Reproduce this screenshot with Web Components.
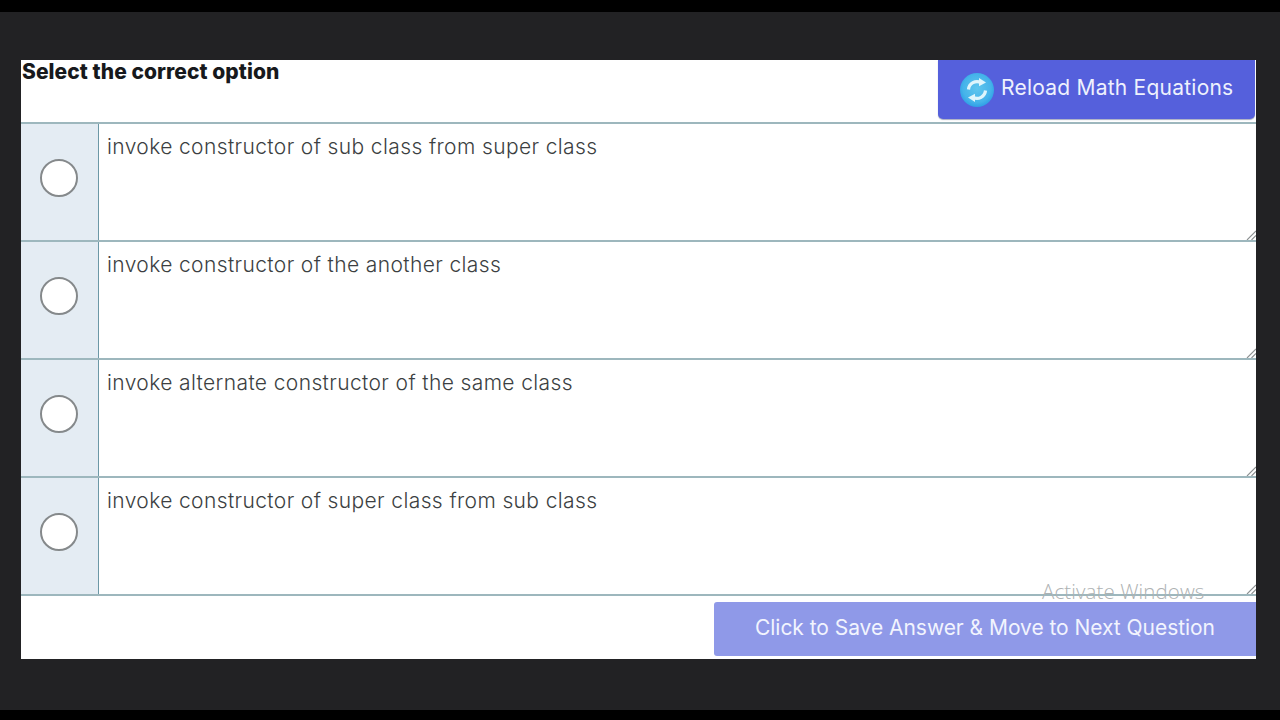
<!DOCTYPE html>
<html lang="en"><head><meta charset="utf-8"><title>Question</title>
<style>
html,body{margin:0;padding:0;background:#000;height:720px;overflow:hidden}
body{font-family:Inter,"Liberation Sans",sans-serif}
</style></head><body>
<video-frame>
  <quiz-card>
    <quiz-header slot="header">
      <span slot="title">Select the correct option</span>
      <reload-button slot="action">Reload Math Equations</reload-button>
    </quiz-header>
    <quiz-option>invoke constructor of sub class from super class</quiz-option>
    <quiz-option>invoke constructor of the another class</quiz-option>
    <quiz-option>invoke alternate constructor of the same class</quiz-option>
    <quiz-option>invoke constructor of super class from sub class</quiz-option>
    <quiz-footer slot="footer">Click to Save Answer &amp; Move to Next Question</quiz-footer>
  </quiz-card>
</video-frame>
<script>
function def(name, html){
  customElements.define(name, class extends HTMLElement{
    constructor(){super();this.attachShadow({mode:'open'}).innerHTML=html;}
  });
}
def('video-frame',`<style>
:host{display:flex;flex-direction:column;width:1280px;height:720px;background:#000}
.mid{margin-top:12px;height:698px;background:#222224;box-sizing:border-box;padding:48px 24px 0 21px}
</style><div class="mid"><slot></slot></div>`);
def('quiz-card',`<style>
:host{display:flex;flex-direction:column;width:1235px;height:599px;background:#fff;position:relative;font-family:Inter,"Liberation Sans",sans-serif}
.wm{position:absolute;left:1021px;top:518px;font:300 20.5px/26px "Open Sans","Liberation Sans",sans-serif;color:#aeb2b3;letter-spacing:.1px;white-space:nowrap}
</style><slot name="header"></slot><slot></slot><slot name="footer"></slot><div class="wm">Activate Windows</div>`);
def('quiz-header',`<style>
:host{display:flex;justify-content:space-between;align-items:flex-start;height:62px;flex:none}
.t{font:800 21px/24px Inter,"Liberation Sans",sans-serif;color:#17191c;letter-spacing:.06px;padding:0 0 0 1px}
</style><div class="t"><slot name="title"></slot></div><slot name="action"></slot>`);
def('reload-button',`<style>
:host{display:flex;align-items:center;gap:7px;box-sizing:border-box;width:317px;height:59px;margin-right:1px;padding:0 0 4px 22px;background:#5560dc;border-radius:0 0 5px 5px;box-shadow:0 1px 1px rgba(60,70,120,.45);color:#eef1fd;font:400 21px/24px Inter,"Liberation Sans",sans-serif;letter-spacing:.23px;white-space:nowrap}
svg{width:34px;height:34px;flex:none;position:relative;top:2px}
</style><svg viewBox="0 0 34 34" aria-hidden="true">
<defs><radialGradient id="g" cx=".5" cy=".45" r=".55"><stop offset="0" stop-color="#5fc6ee"/><stop offset=".75" stop-color="#45b3ea"/><stop offset="1" stop-color="#2f9fe6"/></radialGradient></defs>
<circle cx="17" cy="17" r="17" fill="url(#g)"/>
<path d="M8.500 16.500A8.600 8.600 0 0 1 21 9.600" fill="none" stroke="#dff5fc" stroke-width="3.200"/>
<path d="M19 5l7 4.600-7 3.600z" fill="#dff5fc"/>
<path d="M25.500 17.500A8.600 8.600 0 0 1 13 24.400" fill="none" stroke="#dff5fc" stroke-width="3.200"/>
<path d="M15 29l-7-4.600 7-3.600z" fill="#dff5fc"/>
</svg><span><slot></slot></span>`);
def('quiz-option',`<style>
:host{display:grid;grid-template-columns:77px 1fr;height:118px;box-sizing:border-box;border-top:2px solid #9db7bd;flex:none}
.l{background:#e4ecf3;border-right:1.500px solid #6c98a6;display:flex;align-items:center;justify-content:center;padding:0 2px 8px 0;box-sizing:border-box;width:78px}
.r{box-sizing:border-box;width:38px;height:38px;border-radius:50%;background:#fff;border:2px solid #85898b}
.c{position:relative;padding:10px 0 0 9px;font:300 21px/26px Inter,"Liberation Sans",sans-serif;color:#3c3f42;letter-spacing:.38px;white-space:nowrap}
svg{position:absolute;right:0;bottom:0;width:10px;height:10px}
</style><div class="l"><div class="r"></div></div><div class="c"><slot></slot>
<svg viewBox="0 0 10 10" aria-hidden="true"><path d="M1 10L10 1M5.500 10L10 5.500" stroke="#8b8f90" stroke-width="1.100"/></svg></div>`);
def('quiz-footer',`<style>
:host{display:flex;justify-content:flex-end;box-sizing:border-box;height:65px;flex:none;border-top:2px solid #9db7bd;padding-top:6px}
.b{box-sizing:border-box;width:542px;height:54px;background:#8f99e8;border-radius:3px 0 0 3px;color:#f2f4fe;font:400 21px/52px Inter,"Liberation Sans",sans-serif;text-align:center;white-space:nowrap;letter-spacing:-.04px}
</style><div class="b"><slot></slot></div>`);
</script>
</body></html>
